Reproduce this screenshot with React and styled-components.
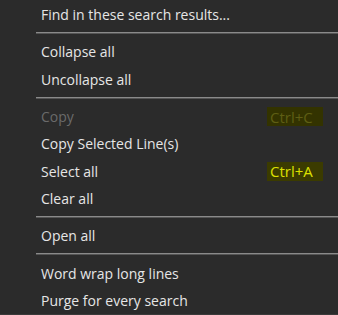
import styled, { createGlobalStyle } from "styled-components";

const GlobalStyle = createGlobalStyle`
  html, body {
    margin: 0;
    padding: 0;
    background: #2b2b2b;
  }
`;

const Menu = styled.ul`
  list-style: none;
  margin: 0;
  padding: 1px 0 0;
  width: 338px;
  height: 315px;
  box-sizing: border-box;
  background: #2b2b2b;
  border-bottom: 1px solid #3a3a3a;
  font-family: "Open Sans", "Noto Sans", sans-serif;
  font-size: 14px;
  overflow: hidden;
`;

const Item = styled.li`
  display: flex;
  align-items: center;
  justify-content: space-between;
  height: 27.3px;
  padding: 0 15px 0 41px;
  color: ${({ $disabled }) => ($disabled ? "#6a6a6a" : "#e6e6e6")};
  white-space: nowrap;
`;

const Shortcut = styled.span`
  display: inline-flex;
  align-items: center;
  width: 56px;
  height: 19px;
  box-sizing: border-box;
  padding-left: 3px;
  font-size: 15px;
  background: ${({ $disabled }) => ($disabled ? "#333300" : "#3b3b00")};
  color: ${({ $disabled }) => ($disabled ? "#5e5e14" : "#dde000")};
`;

const Separator = styled.li`
  height: 10px;
  margin-left: 36px;
  display: flex;
  align-items: center;

  &::after {
    content: "";
    flex: 1;
    height: 2px;
    background: linear-gradient(#8a8a8a 50%, #555 50%);
  }
`;

const entries = [
  { label: "Find in these search results..." },
  "sep",
  { label: "Collapse all" },
  { label: "Uncollapse all" },
  "sep",
  { label: "Copy", shortcut: "Ctrl+C", disabled: true },
  { label: "Copy Selected Line(s)" },
  { label: "Select all", shortcut: "Ctrl+A" },
  { label: "Clear all" },
  "sep",
  { label: "Open all" },
  "sep",
  { label: "Word wrap long lines" },
  { label: "Purge for every search" },
];

export default function App() {
  return (
    <>
      <GlobalStyle />
      <Menu>
        {entries.map((entry, i) =>
          entry === "sep" ? (
            <Separator key={i} />
          ) : (
            <Item key={i} $disabled={entry.disabled}>
              <span>{entry.label}</span>
              {entry.shortcut && (
                <Shortcut $disabled={entry.disabled}>{entry.shortcut}</Shortcut>
              )}
            </Item>
          )
        )}
      </Menu>
    </>
  );
}
